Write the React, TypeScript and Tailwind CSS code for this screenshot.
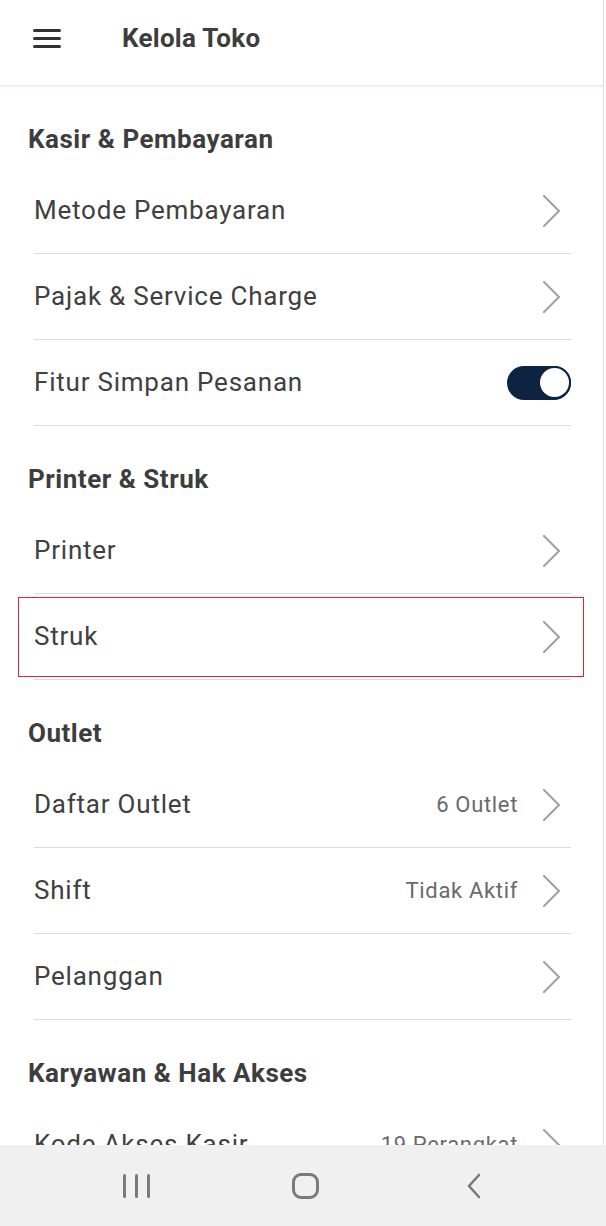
import React, { useState } from 'react';

type Row = {
  label: string;
  value?: string;
  toggle?: boolean;
  highlight?: boolean;
};

type Section = {
  title: string;
  rows: Row[];
};

const sections: Section[] = [
  {
    title: 'Kasir & Pembayaran',
    rows: [
      { label: 'Metode Pembayaran' },
      { label: 'Pajak & Service Charge' },
      { label: 'Fitur Simpan Pesanan', toggle: true },
    ],
  },
  {
    title: 'Printer & Struk',
    rows: [{ label: 'Printer' }, { label: 'Struk', highlight: true }],
  },
  {
    title: 'Outlet',
    rows: [
      { label: 'Daftar Outlet', value: '6 Outlet' },
      { label: 'Shift', value: 'Tidak Aktif' },
      { label: 'Pelanggan' },
    ],
  },
  {
    title: 'Karyawan & Hak Akses',
    rows: [{ label: 'Kode Akses Kasir', value: '19 Perangkat' }],
  },
];

const Chevron = () => (
  <svg width="19" height="34" viewBox="0 0 19 34" fill="none" className="shrink-0">
    <path d="M2 2 L17 17 L2 32" stroke="#a3a3a3" strokeWidth="2.2" strokeLinecap="round" strokeLinejoin="round" />
  </svg>
);

const Toggle = () => {
  const [on, setOn] = useState(true);
  return (
    <button
      onClick={() => setOn(!on)}
      className={`relative w-[64px] h-[34px] rounded-full flex items-center ${on ? 'bg-[#0c2342] justify-end' : 'bg-[#cfcfcf] justify-start'}`}
    >
      <span className="w-[33px] h-[33px] rounded-full bg-white border-2 border-[#0c2342]" />
    </button>
  );
};

const SettingRow = ({ row }: { row: Row }) => (
  <div className="relative h-[86px] flex items-center border-b border-[#dcdcdc]">
    {row.highlight && (
      <div className="absolute left-[-16px] right-[-13px] top-[3px] bottom-[2px] border border-[#e3262d] pointer-events-none" />
    )}
    <span className="flex-1 text-[26px] tracking-[0.03em] text-[#404040]">{row.label}</span>
    {row.toggle ? (
      <Toggle />
    ) : (
      <div className="flex items-center pr-[10px]">
        {row.value && <span className="mr-[24px] text-[22px] text-[#6a6a6a] tracking-[0.03em]">{row.value}</span>}
        <Chevron />
      </div>
    )}
  </div>
);

const App = () => {
  return (
    <div className="h-[1226px] w-[606px] flex flex-col bg-white overflow-hidden" style={{ fontFamily: 'Roboto, "Noto Sans", sans-serif' }}>
      <div className="flex-1 min-h-0 w-[604px] border-r border-[#e2e2e2] flex flex-col">
        {/* top bar */}
        <header className="h-[86px] shrink-0 flex items-center pb-[8px] border-b border-[#e6e6e6] shadow-[0_1px_3px_rgba(0,0,0,0.06)]">
          <div className="ml-[33px] w-[28px] flex flex-col gap-[5px]">
            <span className="h-[3px] bg-[#333] rounded-sm" />
            <span className="h-[3px] bg-[#333] rounded-sm" />
            <span className="h-[3px] bg-[#333] rounded-sm" />
          </div>
          <h1 className="ml-[61px] text-[26px] font-bold text-[#3d3d3d] tracking-[0.01em]">Kelola Toko</h1>
        </header>

        <main className="flex-1 min-h-0 overflow-hidden">
          {sections.map((s) => (
            <section key={s.title}>
              <div className="h-[82px] flex items-end pb-[9px] pl-[28px]">
                <h2 className="text-[26px] font-bold text-[#3d3d3d] tracking-[0.02em]">{s.title}</h2>
              </div>
              <div className="ml-[34px] mr-[32px]">
                {s.rows.map((r) => (
                  <SettingRow key={r.label} row={r} />
                ))}
              </div>
            </section>
          ))}
        </main>
      </div>

      {/* system nav bar */}
      <nav className="h-[81px] shrink-0 bg-[#f0f0f0] flex items-center">
        <div className="flex-1 flex justify-center pl-[52px]">
          <div className="flex gap-[9px] h-[24px]">
            <span className="w-[3px] bg-[#7a7a7a] rounded-full" />
            <span className="w-[3px] bg-[#7a7a7a] rounded-full" />
            <span className="w-[3px] bg-[#7a7a7a] rounded-full" />
          </div>
        </div>
        <div className="flex-1 flex justify-center">
          <span className="w-[27px] h-[26px] rounded-[9px] border-[3px] border-[#7a7a7a]" />
        </div>
        <div className="flex-1 flex justify-center pr-[48px]">
          <svg width="16" height="26" viewBox="0 0 16 26" fill="none">
            <path d="M13 2 L3 13 L13 24" stroke="#7a7a7a" strokeWidth="2.6" strokeLinecap="round" strokeLinejoin="round" />
          </svg>
        </div>
      </nav>
    </div>
  );
};

export default App;
